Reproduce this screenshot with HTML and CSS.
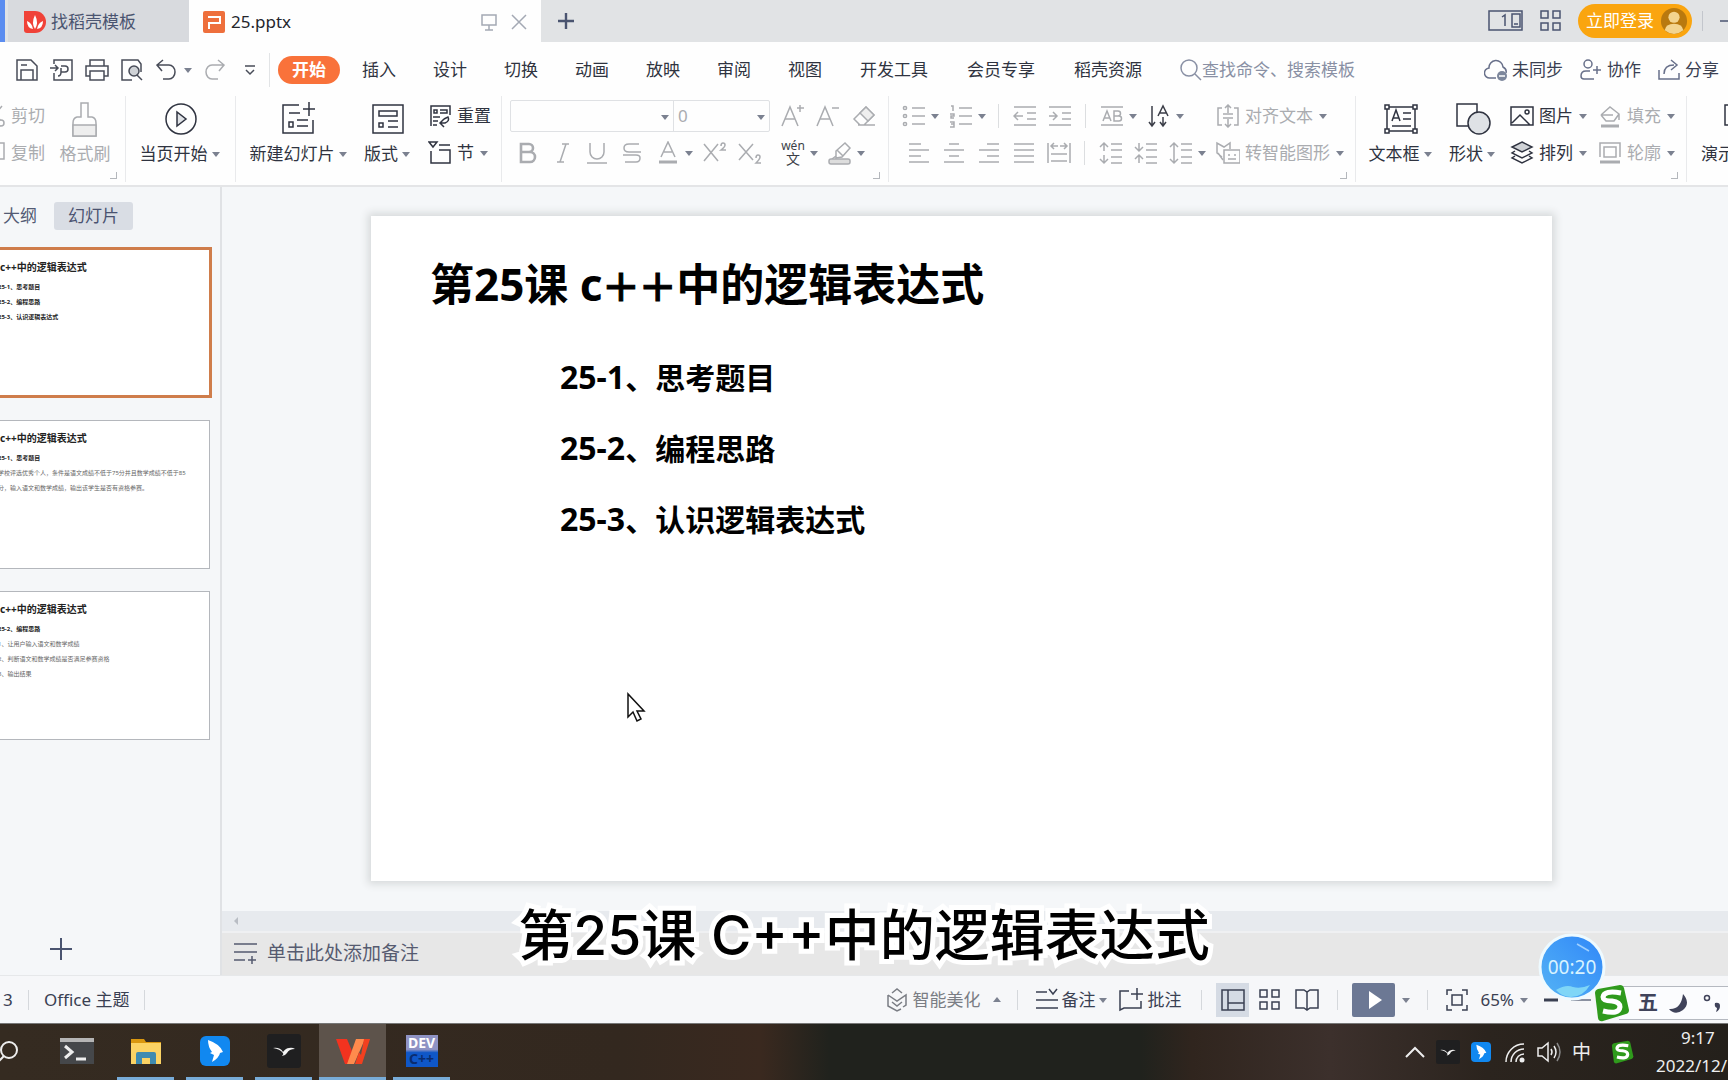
FILE: index.html
```html
<!DOCTYPE html>
<html lang="zh-CN">
<head>
<meta charset="utf-8">
<title>25.pptx</title>
<link rel="stylesheet" href="styles.css">
</head>
<body>
<svg class="sprite" aria-hidden="true">
  <symbol id="caret" viewBox="0 0 12 12"><path d="M2 4h8l-4 5z" fill="currentColor" stroke="none"/></symbol>
  <symbol id="gull" viewBox="0 0 34 34"><rect width="34" height="34" rx="3" fill="#1f1f20" stroke="none"/><path d="M6 14q7-1 10 4 3-4 6-4 3-1 6 1-6 0-8 4-2 3-5 3 2-2 1-3-3-4-10-5z" fill="#f4f4f4" stroke="none"/></symbol>
  <symbol id="wing" viewBox="0 0 30 30"><rect width="30" height="30" rx="6" fill="#1188f0" stroke="none"/><path d="M8 4q12 4 15 12l-3 1q-1 5-8 9l2-7-4-2 2-1q-4-5-4-12z" fill="#fff" stroke="none"/></symbol>
  <symbol id="sogou" viewBox="0 0 38 38"><path d="M3 9Q3 6 6 5L28 1q3 0 4 3l5 22q0 3-3 4L11 37q-4 1-5-3z" fill="#2f9a1c" stroke="none"/><path d="M29 9Q12 6 11 13q0 4 9 4 8 1 8 6-1 8-17 4" fill="none" stroke="#fff" stroke-width="5"/></symbol>
  <symbol id="grid" viewBox="0 0 24 24"><path d="M2 2h7v7H2zM14 2h7v7h-7zM2 14h7v7H2zM14 14h7v7h-7z"/></symbol>
</svg>

<header class="tabstrip">
  <span class="home-edge"></span>
  <button class="doc-tab doc-tab-idle"><svg class="ic" viewBox="0 0 24 24"><path d="M1 1h11a11 11 0 0 1 0 22H4a3 3 0 0 1-3-3z" fill="#f04238" stroke="none"/><path d="M12 19q-4-6 0-14 4 8 0 14zM10 19q-6-1-6-8 5 2 6 8zM14 19q6-1 6-8-5 2-6 8z" fill="#fff" stroke="none"/></svg>找稻壳模板</button>
  <div class="doc-tab doc-tab-active">
    <svg class="ic" viewBox="0 0 24 24"><rect x="1" y="1" width="22" height="22" rx="2" fill="#ee6f3c" stroke="none"/><path d="M6 7h12v6H7v6" stroke="#fff" stroke-width="2"/></svg>
    <span class="doc-name">25.pptx</span>
    <button class="plain faint" aria-label="放映窗口"><svg class="ic-s" viewBox="0 0 20 20"><path d="M3 3h14v10H3zM10 13v5M6 18h8"/></svg></button>
    <button class="plain faint" aria-label="关闭"><svg class="ic-s" viewBox="0 0 20 20"><path d="M3 3l14 14M17 3L3 17"/></svg></button>
  </div>
  <button class="plain new-tab" aria-label="新建"><svg class="ic-s" viewBox="0 0 20 20"><path d="M10 2v16M2 10h16" stroke-width="2.4"/></svg></button>
  <div class="window-tools">
    <button class="plain" aria-label="窗口"><svg class="ic-wide" viewBox="0 0 36 24"><path d="M1 2h33v19H1zM24 5h8v13h-8zM26 15h4M14 8l3-2v11"/></svg></button>
    <button class="plain" aria-label="应用"><svg class="ic"><use href="#grid"/></svg></button>
    <button class="login">立即登录<svg class="avatar" viewBox="0 0 30 30"><circle cx="15" cy="15" r="14" fill="#b9790e" stroke="none"/><circle cx="15" cy="11" r="6" fill="#f3d48f" stroke="none"/><path d="M5 25q1-7 10-7t10 7q-10 8-20 0z" fill="#f3d48f" stroke="none"/></svg></button>
    <span class="tick"></span>
    <button class="plain minimize" aria-label="最小化"><svg class="ic" viewBox="0 0 24 24"><path d="M2 12h20"/></svg></button>
  </div>
</header>

<nav class="menubar">
  <div class="quick">
    <button class="tool" aria-label="保存"><svg class="ic" viewBox="0 0 24 24"><path d="M2 2h14l6 6v14H2zM6 22V12h12v10M6 7h6"/></svg></button>
    <button class="tool" aria-label="输出"><svg class="ic" viewBox="0 0 24 24"><path d="M4 6V2h18v20H4v-7M0 10h8M5 7l3 3-3 3M11 8h4a3 3 0 0 1 0 6h-4v-4M11 14q0 4-3 4"/></svg></button>
    <button class="tool" aria-label="打印"><svg class="ic" viewBox="0 0 24 24"><path d="M5 8V2h14v6M5 18H1V8h22v10h-4M5 13h14v9H5z"/></svg></button>
    <button class="tool" aria-label="打印预览"><svg class="ic" viewBox="0 0 24 24"><path d="M12 22H2V2h16l3 4v8"/><circle cx="14" cy="13" r="5" fill="#cfd2d6"/><path d="M17 17l5 5"/></svg></button>
    <button class="tool tool-drop" aria-label="撤销"><svg class="ic" viewBox="0 0 24 24"><path d="M8 2L2 7l5 6M2 7h12a6 7 0 0 1 0 14H8"/></svg><svg class="caret"><use href="#caret"/></svg></button>
    <button class="tool pale" aria-label="恢复"><svg class="ic" viewBox="0 0 24 24"><path d="M16 2l6 5-5 6M22 7H10a6 7 0 0 0 0 14h6"/></svg></button>
    <button class="tool" aria-label="更多"><svg class="ic-xs" viewBox="0 0 14 14"><path d="M2 3h10M3 7l4 4 4-4"/></svg></button>
  </div>
  <span class="rule"></span>
  <button class="menu-active">开始</button>
  <div class="menus">
    <button>插入</button><button>设计</button><button>切换</button><button>动画</button><button>放映</button><button>审阅</button><button>视图</button><button class="long">开发工具</button><button class="long">会员专享</button><button class="long">稻壳资源</button>
  </div>
  <button class="search"><svg class="ic" viewBox="0 0 24 24"><circle cx="11" cy="10" r="8"/><path d="M17 16l6 6"/></svg>查找命令、搜索模板</button>
  <div class="share">
    <button><svg class="ic" viewBox="0 0 24 24"><path d="M12 20H6a5 5 0 0 1-1-10 7 7 0 0 1 14-1q4 2 3 6"/><circle cx="18" cy="18" r="5" fill="#7d879c" stroke="none"/><path d="M15 18h6" stroke="#fff"/></svg>未同步</button>
    <button><svg class="ic" viewBox="0 0 24 24"><circle cx="9" cy="6" r="4"/><path d="M11 13H7q-5 0-5 5 0 3 3 3h10M18 8v8M14 12h8"/></svg>协作</button>
    <button><svg class="ic" viewBox="0 0 24 24"><path d="M2 12v9h20v-6M7 16Q7 7 17 7M14 2l6 5-6 5"/></svg>分享</button>
  </div>
</nav>

<section class="ribbon">
  <div class="group group-clip">
    <div class="stack pale">
      <div class="row"><button class="label"><svg class="ic" viewBox="0 0 24 24"><path d="M20 2L8 16M10 2l8 14"/><circle cx="19" cy="19" r="3"/></svg>剪切</button></div>
      <div class="row"><button class="label"><svg class="ic" viewBox="0 0 24 24"><path d="M4 6h12v16H4zM8 6V2h14v16h-6"/></svg>复制</button></div>
    </div>
    <button class="big big-brush pale"><svg class="ic-l" viewBox="0 0 36 36"><path d="M14 2h7v14h4q4 1 4 6v13H6V22q0-5 4-6h4z"/><path d="M6 24h23v11H6z" fill="#eee"/></svg><span>格式刷</span></button>
    <i class="corner"></i>
  </div>
  <div class="group group-play">
    <button class="big"><svg class="ic-l" viewBox="0 0 36 36"><circle cx="18" cy="18" r="15"/><path d="M14 11v14l9-7z" fill="#dfe2e6"/></svg><span>当页开始<svg class="caret"><use href="#caret"/></svg></span></button>
  </div>
  <div class="group group-slide">
    <button class="big big-new"><svg class="ic-l" viewBox="0 0 36 36"><path d="M18 4H2v28h30V19M28 1v14M22 8h12M8 12h11M8 21h4v5H8zM16 19h11M16 25h11"/></svg><span>新建幻灯片<svg class="caret"><use href="#caret"/></svg></span></button>
    <button class="big big-layout"><svg class="ic-l" viewBox="0 0 36 36"><path d="M3 4h30v28H3zM9 10h18v5H9zM9 22h4v4H9zM18 20h10M18 26h10"/></svg><span>版式<svg class="caret"><use href="#caret"/></svg></span></button>
    <div class="stack">
      <div class="row"><button class="label"><svg class="ic" viewBox="0 0 24 24"><path d="M3 22V2h19v9M6 6h3v3H6zM12 6h7v3h-7M5 13h7M5 17h5M5 21h4M13 19h4q5-2 3-6l-4 2M16 15l-4 4 4 4"/></svg>重置</button></div>
      <div class="row"><button class="label"><svg class="ic" viewBox="0 0 24 24"><path d="M11 4h11M3 10v12h19V9H11M1 1h8L5 6z"/></svg>节<svg class="caret"><use href="#caret"/></svg></button></div>
    </div>
  </div>
  <div class="group group-font pale">
    <div class="stack">
      <div class="row">
        <div class="combos">
          <label class="combo combo-font"><select aria-label="字体"><option></option></select><svg class="caret"><use href="#caret"/></svg></label>
          <label class="combo combo-size"><select aria-label="字号"><option>0</option></select><svg class="caret"><use href="#caret"/></svg></label>
        </div>
        <button class="tool" aria-label="增大字号"><svg class="ic" viewBox="0 0 24 24"><path d="M1 22L9 3l8 19M4 15h10M16 4h7M19 1v7"/></svg></button>
        <button class="tool" aria-label="减小字号"><svg class="ic" viewBox="0 0 24 24"><path d="M1 22L9 3l8 19M4 15h10M16 4h7"/></svg></button>
        <button class="tool" aria-label="清除格式"><svg class="ic" viewBox="0 0 24 24"><path d="M9 21l-6-6L15 3l8 8-10 10zM7 21h17"/><path d="M9 9l8 8 6-6-8-8z" fill="#eee"/></svg></button>
      </div>
      <div class="row">
        <button class="tool" aria-label="加粗"><svg class="ic" viewBox="0 0 24 24"><path d="M5 3h8a4 4 0 0 1 0 8H5h9a5 5 0 0 1 0 10H5z" stroke-width="2.6"/></svg></button>
        <button class="tool" aria-label="倾斜"><svg class="ic" viewBox="0 0 24 24"><path d="M11 3h7M6 21h7M15 3L9 21"/></svg></button>
        <button class="tool" aria-label="下划线"><svg class="ic" viewBox="0 0 24 24"><path d="M4 2v9a7 7 0 0 0 14 0V2M1 22h20"/></svg></button>
        <button class="tool" aria-label="删除线"><svg class="ic" viewBox="0 0 24 24"><path d="M18 3H8q-5 0-5 4t5 4h12M2 14h13q4 0 4 3 0 4-4 4H4"/></svg></button>
        <button class="tool tool-drop" aria-label="字体颜色"><svg class="ic" viewBox="0 0 24 24"><path d="M5 16l7-15 7 15M8 11h8"/><path d="M3 21h18" stroke-width="3"/></svg><svg class="caret"><use href="#caret"/></svg></button>
        <button class="tool" aria-label="上标"><svg class="ic" viewBox="0 0 24 24"><path d="M1 3l14 17M15 3L1 20M18 5q0-3 2-3t2 2q0 2-4 5h5"/></svg></button>
        <button class="tool tool-sub" aria-label="下标"><svg class="ic" viewBox="0 0 24 24"><path d="M1 3l14 16M15 3L1 19M18 17q0-3 2-3t2 2q0 2-4 6h5"/></svg></button>
        <button class="tool tool-drop dark" aria-label="拼音指南"><span class="pinyin"><span>wén</span><span>文</span></span><svg class="caret"><use href="#caret"/></svg></button>
        <button class="tool tool-drop" aria-label="突出显示"><svg class="ic" viewBox="0 0 24 24"><path d="M8 10l9-8 5 5-8 9-6 1zM9 9l6 6M8 15l-4 3"/><rect x="1" y="18" width="21" height="5" rx="2" fill="#ddd"/></svg><svg class="caret"><use href="#caret"/></svg></button>
      </div>
    </div>
    <i class="corner"></i>
  </div>
  <div class="group group-para pale">
    <div class="stack">
      <div class="row">
        <button class="tool tool-drop" aria-label="项目符号"><svg class="ic" viewBox="0 0 24 24"><path d="M10 4h13M10 12h13M10 20h13"/><circle cx="3" cy="4" r="1.6"/><circle cx="3" cy="12" r="1.6"/><circle cx="3" cy="20" r="1.6"/></svg><svg class="caret"><use href="#caret"/></svg></button>
        <button class="tool tool-drop" aria-label="编号"><svg class="ic" viewBox="0 0 24 24"><path d="M10 4h13M10 12h13M10 20h13M2 2h2v5M1 10h4v2H2v2h3M1 18h4v5H1M2 20h3"/></svg><svg class="caret"><use href="#caret"/></svg></button>
        <span class="sep"></span>
        <button class="tool" aria-label="减少缩进"><svg class="ic" viewBox="0 0 24 24"><path d="M1 3h22M14 9h9M14 15h9M1 21h22M1 12h9M5 8l-4 4 4 4"/></svg></button>
        <button class="tool" aria-label="增加缩进"><svg class="ic" viewBox="0 0 24 24"><path d="M1 3h22M14 9h9M14 15h9M1 21h22M1 12h8M5 8l4 4-4 4"/></svg></button>
        <span class="sep"></span>
        <button class="tool tool-drop" aria-label="分散对齐"><svg class="ic" viewBox="0 0 24 24"><path d="M1 3h22M1 21h22M3 17l4-10 4 10M4 14h6M14 7h4a2 2 0 0 1 0 5h-4 5a2 2 0 0 1 0 5h-5z"/></svg><svg class="caret"><use href="#caret"/></svg></button>
        <button class="tool tool-drop dark" aria-label="文字方向"><svg class="ic" viewBox="0 0 24 24"><path d="M5 2v20M2 18l3 4 3-4M11 12l5-10 5 10M13 9h6M16 13v9M13 18l3 4 3-4"/></svg><svg class="caret"><use href="#caret"/></svg></button>
        <button class="label label-align"><svg class="ic" viewBox="0 0 24 24"><path d="M6 4H2v17h4M18 4h4v17h-4M12 1v8M9 4l3-3 3 3M7 10h10M7 14h10M12 15v8M9 20l3 3 3-3"/></svg>对齐文本<svg class="caret"><use href="#caret"/></svg></button>
      </div>
      <div class="row row-indent">
        <button class="tool" aria-label="左对齐"><svg class="ic" viewBox="0 0 24 24"><path d="M2 3h12M2 9h20M2 15h12M2 21h20"/></svg></button>
        <button class="tool" aria-label="居中"><svg class="ic" viewBox="0 0 24 24"><path d="M7 3h10M2 9h20M7 15h10M2 21h20"/></svg></button>
        <button class="tool" aria-label="右对齐"><svg class="ic" viewBox="0 0 24 24"><path d="M10 3h12M2 9h20M10 15h12M2 21h20"/></svg></button>
        <button class="tool" aria-label="两端对齐"><svg class="ic" viewBox="0 0 24 24"><path d="M2 3h20M2 9h20M2 15h20M2 21h20"/></svg></button>
        <button class="tool" aria-label="分散"><svg class="ic" viewBox="0 0 24 24"><path d="M1 2v20M23 2v20M4 13h16M4 20h16M4 5h7M13 5h7M7 2L4 5l3 3M17 2l3 3-3 3"/></svg></button>
        <span class="sep"></span>
        <button class="tool" aria-label="增大段距"><svg class="ic" viewBox="0 0 24 24"><path d="M12 3h11M12 9h11M12 16h11M12 22h11M5 10V2M1 6l4-4 4 4M5 14v8M1 18l4 4 4-4"/></svg></button>
        <button class="tool" aria-label="减小段距"><svg class="ic" viewBox="0 0 24 24"><path d="M12 3h11M12 9h11M12 16h11M12 22h11M5 2v8M1 6l4 4 4-4M5 22v-8M1 18l4-4 4 4"/></svg></button>
        <button class="tool tool-drop" aria-label="行距"><svg class="ic" viewBox="0 0 24 24"><path d="M12 3h11M12 9h11M12 16h11M12 22h11M5 2v20M1 6l4-4 4 4M1 18l4 4 4-4"/></svg><svg class="caret"><use href="#caret"/></svg></button>
        <button class="label"><svg class="ic" viewBox="0 0 24 24"><path d="M6 16L1 12V2l7 4 6-4v6M2 12l5 7"/><path d="M8 9h16v13H8zM12 14h2M18 14h2M12 18h8"/></svg>转智能图形<svg class="caret"><use href="#caret"/></svg></button>
      </div>
    </div>
    <i class="corner"></i>
  </div>
  <div class="group group-draw">
    <button class="big big-text"><svg class="ic-l" viewBox="0 0 36 36"><path d="M4 6h28v24H4zM9 20l4-11 4 11M10 17h6M20 12h8M20 18h8M9 25h19"/><path d="M2 4h4v4H2zM30 4h4v4h-4zM2 28h4v4H2zM30 28h4v4h-4z" fill="#fff"/></svg><span>文本框<svg class="caret"><use href="#caret"/></svg></span></button>
    <button class="big big-shape"><svg class="ic-l" viewBox="0 0 36 36"><path d="M2 3h20v22H2z"/><circle cx="24" cy="22" r="11" fill="#dfe2e6"/></svg><span>形状<svg class="caret"><use href="#caret"/></svg></span></button>
    <div class="stack">
      <div class="row"><button class="label"><svg class="ic" viewBox="0 0 24 24"><path d="M1 3h22v18H1zM2 19l8-8 10 10"/><circle cx="17" cy="8" r="2"/></svg>图片<svg class="caret"><use href="#caret"/></svg></button></div>
      <div class="row"><button class="label"><svg class="ic" viewBox="0 0 24 24"><path d="M12 1l10 5-10 5L2 6z" fill="#cfd2d6"/><path d="M5 10l-3 2 10 5 10-5-3-2M5 15l-3 2 10 5 10-5-3-2"/></svg>排列<svg class="caret"><use href="#caret"/></svg></button></div>
    </div>
    <div class="stack pale">
      <div class="row"><button class="label"><svg class="ic" viewBox="0 0 24 24"><path d="M3 11l9-8 9 7v6M3 11l5 6h8l5-7M3 11h12"/><path d="M3 22h18" stroke-width="3"/></svg>填充<svg class="caret"><use href="#caret"/></svg></button></div>
      <div class="row"><button class="label"><svg class="ic" viewBox="0 0 24 24"><path d="M2 16V2h20v14M6 16V6h12v10z"/><path d="M2 21h20" stroke-width="3"/></svg>轮廓<svg class="caret"><use href="#caret"/></svg></button></div>
    </div>
    <i class="corner"></i>
  </div>
  <div class="group group-tools">
    <button class="big"><svg class="ic-l" viewBox="0 0 36 36"><path d="M1 4h34v20H1z"/></svg><span>演示工具<svg class="caret"><use href="#caret"/></svg></span></button>
  </div>
</section>

<main class="work">
  <aside class="side">
    <div class="side-tabs"><button>大纲</button><button class="on">幻灯片</button></div>
    <ol class="thumbs">
      <li class="thumb current"><h3>第25课 c++中的逻辑表达式</h3><p>25-1、思考题目</p><p>25-2、编程思路</p><p>25-3、认识逻辑表达式</p></li>
      <li class="thumb"><h3>第25课 c++中的逻辑表达式</h3><p>25-1、思考题目</p><p class="body">学校评选优秀个人，条件是语文成绩不低于75分并且数学成绩不低于85</p><p class="body">分，输入语文和数学成绩，输出该学生是否有资格参赛。</p></li>
      <li class="thumb"><h3>第25课 c++中的逻辑表达式</h3><p>25-2、编程思路</p><p class="body step">1、让用户输入语文和数学成绩</p><p class="body step">2、判断语文和数学成绩是否满足参赛资格</p><p class="body step">3、输出结果</p></li>
    </ol>
    <button class="plain add-slide" aria-label="新建幻灯片"><svg class="ic" viewBox="0 0 24 24"><path d="M12 1v22M1 12h22" stroke-width="2"/></svg></button>
  </aside>
  <section class="editor">
    <div class="stage">
      <article class="slide">
        <h1>第25课 c<span class="plus">++</span>中的逻辑表达式</h1>
        <ul>
          <li><span class="num">25-1</span>、思考题目</li>
          <li><span class="num">25-2</span>、编程思路</li>
          <li><span class="num">25-3</span>、认识逻辑表达式</li>
        </ul>
      </article>
    </div>
    <div class="hscroll"><svg class="caret" viewBox="0 0 12 12"><path d="M8 2v8L4 6z" fill="currentColor" stroke="none"/></svg></div>
    <button class="notes"><svg class="ic" viewBox="0 0 24 24"><path d="M1 3h23M1 11h23M1 19h11M19 15v8M15 19h8"/></svg>单击此处添加备注</button>
  </section>
</main>

<footer class="status">
  <span class="page-no">3</span><span class="tick"></span><span class="theme">Office 主题</span><span class="tick"></span>
  <div class="status-right">
    <button class="s-smart"><svg class="ic" viewBox="0 0 24 24"><path d="M7 5l5-4 5 4M3 7v11l9 5 4-2M3 7l9 6 9-6v10l-3 2M7 14l5 4 5-4"/></svg>智能美化<svg class="caret caret-up"><use href="#caret"/></svg></button>
    <span class="tick"></span>
    <button class="s-notes"><svg class="ic" viewBox="0 0 24 24"><path d="M1 4h11M1 12h22M1 20h22M14 1l4 5 4-5"/></svg>备注<svg class="caret"><use href="#caret"/></svg></button>
    <button class="s-comment"><svg class="ic" viewBox="0 0 24 24"><path d="M10 3H1v19l4-2h17v-7M18 0v12M12 6h12"/></svg>批注</button>
    <span class="tick"></span>
    <button class="view on" aria-label="普通视图"><svg class="ic" viewBox="0 0 24 24"><path d="M1 2h22v20H1zM7 2v20M7 15h16"/></svg></button>
    <button class="view" aria-label="浏览视图"><svg class="ic"><use href="#grid"/></svg></button>
    <button class="view" aria-label="阅读视图"><svg class="ic" viewBox="0 0 24 24"><path d="M12 4v18M1 2h8l3 2 3-2h8v18h-8l-3 2-3-2H1z"/></svg></button>
    <span class="tick"></span>
    <button class="play" aria-label="放映"><svg class="ic" viewBox="0 0 24 24"><path d="M7 3v18l13-9z" fill="#fff" stroke="none"/></svg></button><svg class="caret"><use href="#caret"/></svg>
    <span class="tick"></span>
    <button class="s-zoom"><svg class="ic" viewBox="0 0 24 24"><path d="M7 7h10v10H7zM2 7V2h5M17 2h5v5M22 17v5h-5M7 22H2v-5"/></svg>65%<svg class="caret"><use href="#caret"/></svg></button>
    <button class="plain zoom-out" aria-label="缩小"><svg class="ic" viewBox="0 0 24 24"><path d="M5 12h14" stroke-width="3"/></svg></button>
    <span class="zoom-track"></span>
  </div>
</footer>

<footer class="taskbar">
  <div class="apps">
    <button class="find" aria-label="搜索"><svg class="ic" viewBox="0 0 24 24"><circle cx="13" cy="10" r="8" stroke-width="2"/><path d="M8 16l-6 6" stroke-width="2"/></svg></button>
    <button class="app" aria-label="终端"><svg class="ic-app" viewBox="0 0 34 34"><path d="M0 4h34v26H0z" fill="#45474a" stroke="none"/><path d="M0 4h34v4H0z" fill="#b5b5b5" stroke="none"/><path d="M5 12l7 6-7 6" stroke="#eee" stroke-width="3"/><path d="M16 25h10" stroke="#eee" stroke-width="3"/></svg></button>
    <button class="app open" aria-label="文件资源管理器"><svg class="ic-app" viewBox="0 0 34 34"><path d="M2 5h13l2 3h15v22H2z" fill="#d9970f" stroke="none"/><path d="M2 9h30v21H2z" fill="#fbd364" stroke="none"/><path d="M7 30V20q0-2 2-2h16q2 0 2 2v10h-6v-6h-8v6z" fill="#3f8bb0" stroke="none"/></svg></button>
    <button class="app open" aria-label="飞书"><svg class="ic-m"><use href="#wing"/></svg></button>
    <button class="app open" aria-label="录屏"><svg class="ic-app"><use href="#gull"/></svg></button>
    <button class="app open active" aria-label="WPS"><svg class="ic-app" viewBox="0 0 34 34"><path d="M0 5h11l5 12-4 13H9z" fill="#f2331f" stroke="none"/><path d="M20 5h9L18 30h-7z" fill="#ff8b4d" stroke="none"/><path d="M23 18l2 3 3-16h6l-8 25h-7z" fill="#f2401f" stroke="none"/></svg></button>
    <button class="app open" aria-label="Dev-C++"><span class="dev"><b>DEV</b><b class="cpp">C++</b></span></button>
  </div>
  <div class="tray">
    <svg class="ic-s" viewBox="0 0 20 20"><path d="M1 15l9-9 9 9" stroke-width="2"/></svg>
    <svg class="ic"><use href="#gull"/></svg>
    <svg class="ic-s"><use href="#wing"/></svg>
    <svg class="ic" viewBox="0 0 24 24"><path d="M4 22A18 18 0 0 1 22 4M9 22A13 13 0 0 1 22 9M14 22a8 8 0 0 1 8-8"/><circle cx="20" cy="20" r="2.5" fill="#eee" stroke="none"/></svg>
    <svg class="ic" viewBox="0 0 24 24"><path d="M1 8h4l6-5v18l-6-5H1zM14 9q2 3 0 6M17 6q4 6 0 12"/><path d="M20 3q6 9 0 18" stroke="#888"/></svg>
    <span class="lang">中</span>
    <svg class="ic"><use href="#sogou"/></svg>
    <time class="clock"><span>9:17</span><span>2022/12/</span></time>
  </div>
</footer>

<div class="caption">第25课 C++中的逻辑表达式</div>
<div class="timer"><svg viewBox="0 0 68 68"><defs><linearGradient id="water" x1="0" y1="1" x2="1" y2="0"><stop offset="0" stop-color="#55b4f5"/><stop offset="1" stop-color="#2f86f8"/></linearGradient></defs><circle cx="34" cy="34" r="32" fill="url(#water)" stroke="#eefaff" stroke-width="3"/><path d="M18 57q10-6 17-3 8 2 17-2-7 12-19 12-9 0-15-7z" fill="#7fd6f7" stroke="none"/><path d="M39 11l12 7" stroke="#9fd0ff"/></svg><span>00:20</span></div>
<div class="ime"><svg class="ime-logo"><use href="#sogou"/></svg><span>五</span><svg class="ic" viewBox="0 0 24 24"><path d="M16 3q8 9 0 16-8 6-14-1 12 1 14-15z" fill="#40435a" stroke="none"/></svg><svg class="ic" viewBox="0 0 24 24"><circle cx="7" cy="7" r="2.5"/><path d="M15 12q5-1 5 3 0 4-4 6 1-3 1-4-3-1-2-5z" fill="#40435a" stroke="none"/></svg></div>
<svg class="pointer" viewBox="0 0 20 32"><path d="M2 2v23l5-5 4 9 4-2-4-8h7z" fill="#fff" stroke="#111" stroke-width="1.5"/></svg>
</body>
</html>
```
FILE: styles.css
```css
* { box-sizing: border-box; }
body {
  margin: 0;
  min-height: 100vh;
  display: flex;
  flex-direction: column;
  position: relative;
  overflow: hidden;
  background: #fefefe;
  color: #2f3340;
  font: 17px/24px "Noto Sans", "Noto Sans CJK SC", sans-serif;
}
button, select { font: inherit; color: inherit; background: none; border: 0; margin: 0; padding: 0; white-space: nowrap; }
svg { display: block; flex: none; fill: none; stroke: currentColor; stroke-width: 1.5; }
.sprite { position: absolute; width: 0; height: 0; }
.ic { width: 24px; height: 24px; }
.ic-xs { width: 14px; height: 14px; }
.ic-s { width: 20px; height: 20px; }
.ic-m { width: 30px; height: 30px; }
.ic-l { width: 36px; height: 36px; }
.ic-wide { width: 36px; height: 24px; }
.ic-app { width: 34px; height: 34px; }
.caret { width: 12px; height: 12px; color: #7b8190; }
.caret-up { transform: rotate(180deg); }
.pale { color: #aaacb0; }
.dark { color: #3b3e48; }
.plain { display: flex; align-items: center; justify-content: center; }
.tick { width: 1px; height: 20px; background: #d5d8dc; }

/* document tabs */
.tabstrip { display: flex; align-items: center; height: 42px; background: #e1e3e5; color: #4a5470; flex: none; }
.home-edge { width: 5px; height: 42px; background: #5b8df0; margin-right: 3px; }
.doc-tab { display: flex; align-items: center; height: 42px; padding-top: 2px; }
.doc-tab-idle { width: 181px; padding-left: 15px; gap: 4px; background: #d8dade; }
.doc-tab-active { width: 352px; padding: 2px 12px 0 13px; gap: 10px; background: #fefefe; color: #24262c; }
.doc-tab-active .ic { margin-right: -5px; }
.doc-name { flex: 1; }
.faint { color: #a4a9b4; }
.new-tab { width: 50px; height: 42px; }
.window-tools { display: flex; align-items: center; margin-left: auto; gap: 15px; }
.window-tools .tick { margin-left: -5px; background: #c3c6cc; }
.login { display: flex; align-items: center; gap: 6px; height: 34px; padding: 0 4px 0 8px; border-radius: 17px; background: #faa50f; color: #fff; }
.avatar { width: 28px; height: 28px; }
.minimize { width: 10px; justify-content: flex-start; overflow: hidden; }

/* menu bar */
.menubar { display: flex; align-items: center; height: 54px; padding: 2px 9px 0 9px; flex: none; }
.quick { display: flex; align-items: center; color: #484c58; }
.tool { display: flex; align-items: center; justify-content: center; width: 35px; height: 35px; flex: none; }
.tool-drop { width: 47px; justify-content: flex-start; padding-left: 6px; gap: 3px; }
.quick .tool:last-child { width: 38px; }
.rule { width: 1px; height: 34px; margin-right: 8px; background: #e2e4e6; }
.menu-active { height: 28px; padding: 0 14px; border-radius: 14px; margin-right: 4px; background: #f9723a; color: #fff; font-weight: 700; }
.menus { display: flex; gap: 1px; }
.menus button { padding: 0 18px; }
.menus .long { padding: 0 19px; }
.search { display: flex; align-items: center; margin-left: 17px; color: #8990a4; }
.share { display: flex; align-items: center; gap: 16px; margin-left: auto; color: #3a4052; }
.share button { display: flex; align-items: center; gap: 4px; }
.share svg { color: #68708a; }

/* ribbon */
.ribbon { display: flex; height: 91px; border-bottom: 2px solid #e4e5e7; flex: none; overflow: hidden; }
.group { display: flex; position: relative; padding-top: 1px; height: 86px; border-right: 1px solid #e9eaec; flex: none; }
.group-clip { width: 126px; }
.group-clip .stack { margin-left: -24px; }
.group-play { width: 110px; justify-content: center; }
.group-slide { width: 266px; }
.group-slide .stack { margin-left: 8px; }
.group-font { width: 387px; padding-left: 8px; }
.group-para { width: 467px; padding-left: 7px; }
.group-draw { width: 331px; padding-left: 4px; }
.group-draw .stack { width: 88px; }
.group-tools { padding-left: 14px; border: 0; }
.row { display: flex; align-items: center; height: 37px; }
.row-indent { padding-left: 5px; }
.label { display: flex; align-items: center; height: 35px; }
.label > svg:first-child { margin: 0 5px 0 6px; }
.label .caret { margin-left: 4px; }
.label-align { margin-left: 22px; }
.sep { width: 17px; height: 24px; flex: none; background: linear-gradient(#dcdee0, #dcdee0) center / 1px 100% no-repeat; }
.big { display: flex; flex-direction: column; align-items: center; padding-top: 4px; gap: 5px; }
.big span { display: flex; align-items: center; }
.big .caret { margin-left: 2px; }
.big-brush, .big-text { width: 82px; }
.big-new { width: 126px; }
.big-layout { width: 52px; }
.big-shape { width: 62px; }
.corner { position: absolute; right: 8px; bottom: 3px; width: 7px; height: 7px; border: solid #b4b7bc; border-width: 0 1px 1px 0; }
.combos { display: flex; height: 32px; border: 1px solid #dfe1e4; border-radius: 2px; margin-right: 5px; }
.combo { position: relative; display: flex; }
.combo select { appearance: none; width: 100%; padding-left: 4px; outline: 0; }
.combo .caret { position: absolute; right: 2px; top: 10px; }
.combo-font { width: 163px; border-right: 1px solid #dfe1e4; }
.combo-size { width: 95px; }
.tool-sub { margin-right: 8px; }
.pinyin { display: flex; flex-direction: column; align-items: center; width: 24px; font-size: 12px; line-height: 13px; }
.pinyin span:last-child { font-size: 14px; line-height: 14px; }

/* work area */
.work { display: flex; flex: 1; background: #f5f7f9; }
.side { display: flex; flex-direction: column; width: 222px; border-right: 2px solid #e0e2e5; overflow: hidden; color: #535b74; }
.side-tabs { display: flex; align-items: center; gap: 17px; padding: 15px 0 17px 3px; }
.side-tabs button { height: 28px; }
.side-tabs .on { padding: 0 14px; border-radius: 3px; background: #d9dde4; color: #4a5270; }
.thumbs { list-style: none; margin: 0; padding: 0; display: flex; flex-direction: column; gap: 22px; }
.thumb { width: 267px; height: 149px; margin-left: -57px; padding: 10px 0 0 22px; border: 1px solid #b4b7bc; background: #fff; color: #222; white-space: nowrap; }
.thumb.current { width: 269px; height: 151px; padding: 10px 0 0 20px; border: 3px solid #cf7d4b; }
.thumb h3 { margin: 0 0 6px; font-size: 10px; line-height: 14px; }
.thumb p { margin: 0; padding-left: 32px; font-size: 6px; line-height: 15px; font-weight: 700; }
.thumb .body { font-weight: 400; color: #666; }
.add-slide { width: 24px; margin: auto 0 14px 49px; color: #4a5470; }
.editor { display: flex; flex-direction: column; flex: 1; }
.stage { display: flex; flex: 1; padding: 29px 176px 30px 149px; }
.slide { flex: 1; padding: 36px 59px; background: #fff; color: #000; box-shadow: 0 0 8px 3px #d6d9da; }
.slide h1 { margin: 0; font-size: 44px; line-height: 64px; }
.plus { font-family: "DejaVu Sans", sans-serif; font-weight: 400; -webkit-text-stroke: 1px #000; }
.slide ul { list-style: none; margin: 24px 0 0 130px; padding: 0; font-size: 30px; line-height: 71px; font-weight: 700; }
.num { font-size: 32px; line-height: 32px; }
.hscroll { display: flex; align-items: center; height: 22px; padding-left: 8px; background: #e7eaee; border-bottom: 2px solid #eff0f2; }
.hscroll .caret { color: #b9bdc4; }
.notes { display: flex; align-items: center; gap: 10px; height: 42px; padding: 0 0 3px 11px; background: #e7e7e7; color: #565b70; font-size: 19px; }

/* status bar */
.status { display: flex; align-items: center; height: 48px; padding-left: 3px; background: #f6f7f9; border-top: 1px solid #e6e8ea; color: #3a4052; flex: none; }
.page-no { width: 25px; }
.theme { padding: 0 14px 0 15px; }
.status-right { display: flex; align-items: center; margin-left: auto; padding-right: 137px; }
.status-right button { display: flex; align-items: center; gap: 4px; }
.status-right .s-smart { color: #7a7d84; gap: 3px; margin-right: 14px; }
.s-smart .caret { margin-left: 8px; }
.status-right .s-notes { gap: 2px; margin: 0 10px 0 17px; }
.s-comment { margin-right: 20px; }
.status-right .view { width: 33px; height: 34px; justify-content: center; margin-right: 4px; }
.view.on { background: #d5dbe4; margin-left: 14px; }
.view + .tick { margin-left: 10px; }
.status-right .play { width: 43px; height: 34px; justify-content: center; margin: 0 5px 0 14px; background: #6c7894; border-radius: 2px; }
.play + .caret { margin-right: 15px; }
.s-zoom { margin-left: 17px; }
.s-zoom .ic { margin-right: 7px; }
.zoom-out { margin-left: 9px; }
.zoom-track { width: 20px; height: 2px; margin-left: 8px; background: #8a90a0; }

/* task bar */
.taskbar { display: flex; height: 57px; flex: none; overflow: hidden; color: #eee; border-top: 1px solid #777; background: linear-gradient(90deg, #352b21 0%, #33281f 36%, #3a291f 44%, #20221d 48%, #20221d 66%, #30251e 69%, #3c302c 77%, #2b241e 86%, #24201b 100%); }
.apps { display: flex; gap: 12px; }
.find { width: 32px; margin-left: -4px; display: flex; align-items: center; }
.app { display: flex; align-items: center; justify-content: center; width: 57px; border-bottom: 3px solid transparent; }
.find + .app { margin-left: 8px; }
.open { border-color: #78acd8; }
.active { width: 67px; margin: 0 -5px; background: #5d534b; }
.dev { display: flex; flex-direction: column; width: 32px; height: 32px; background: linear-gradient(#8f93c4 0 45%, #0f57c8 55%); color: #fff; font-size: 14px; line-height: 16px; }
.cpp { color: #0a2c70; }
.tray { display: flex; align-items: center; gap: 11px; margin-left: auto; }
.lang { font-size: 19px; }
.tray .lang + .ic { margin-left: 8px; }
.clock { display: flex; flex-direction: column; width: 72px; margin-left: 11px; line-height: 28px; }
.clock span:first-child { padding-left: 25px; }

/* floating overlays */
.caption { position: absolute; left: 0; right: 0; top: 895px; text-align: center; white-space: nowrap; font: 500 55px/80px "Inter", "Noto Sans CJK SC", sans-serif; color: #000; -webkit-text-stroke: 10px #fff; paint-order: stroke fill; stroke-linejoin: round; }
.timer { position: absolute; right: 122px; top: 933px; width: 68px; height: 68px; color: #d8f3ff; display: grid; place-items: center; font-size: 19px; }
.timer svg, .timer span { grid-area: 1 / 1; }
.timer svg { width: 68px; height: 68px; }
.ime { position: absolute; right: 0; top: 986px; display: flex; align-items: center; gap: 9px; height: 34px; width: 109px; border: solid #b5b9c0; border-width: 1px 0; background: #fbfcfe; color: #40435a; font-size: 20px; font-weight: 700; }
.ime-logo { width: 38px; height: 38px; margin: 0 -1px 0 -27px; }
.pointer { position: absolute; left: 626px; top: 692px; width: 20px; height: 32px; }
```
